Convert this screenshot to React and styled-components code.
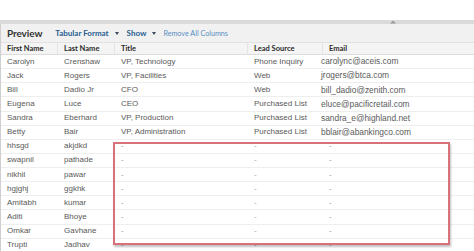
import React from "react";
import styled, { createGlobalStyle } from "styled-components";

const GlobalStyle = createGlobalStyle`
  html, body {
    margin: 0;
    padding: 0;
    background: #ffffff;
    overflow: hidden;
  }
  body {
    font-family: "Liberation Sans", Arial, sans-serif;
  }
`;

const Page = styled.div`
  position: relative;
  width: 474px;
  height: 251px;
  overflow: hidden;
  background: #fff;
`;

const TopSpace = styled.div`
  height: 20px;
  background: #fff;
`;

const Splitter = styled.div`
  height: 4px;
  background: #dadada;
  display: flex;
  justify-content: flex-start;
  padding-left: 390px;
  align-items: center;

  svg {
    display: block;
  }
`;

const Panel = styled.div`
  border-left: 1px solid #cfcfcf;
`;

const PreviewBar = styled.div`
  height: 18px;
  background: #f1f1f1;
  display: flex;
  align-items: center;
  padding-left: 6px;
  font-family: Lato, "Open Sans", sans-serif;
`;

const Heading = styled.span`
  font-size: 10px;
  font-weight: 700;
  color: #333;
  margin-right: 13px;
  letter-spacing: -0.1px;
`;

const MenuLink = styled.span`
  display: inline-flex;
  align-items: center;
  font-size: ${(p) => (p.$plain ? 7.2 : 8)}px;
  font-weight: ${(p) => (p.$plain ? 400 : 700)};
  color: ${(p) => (p.$plain ? "#5b8fc4" : "#275d91")};
`;

const Caret = styled.span`
  display: inline-block;
  width: 0;
  height: 0;
  border-left: 2px solid transparent;
  border-right: 2px solid transparent;
  border-top: 3px solid #3c4a5a;
  margin-left: 6px;
  margin-right: ${(p) => p.$gap}px;
`;

const Grid = styled.div`
  display: grid;
  grid-template-columns: 57px 57px 133px 75px 1fr;
  height: ${(p) => (p.$head ? 13 : 14.13)}px;
  box-sizing: border-box;
  align-items: center;
  background: ${(p) => (p.$head ? "#f4f4f4" : "#fff")};
  border-top: ${(p) => (p.$head ? "1px solid #e2e2e2" : "none")};
  border-bottom: 1px solid ${(p) => (p.$head ? "#dcdcdc" : "#eeeeee")};
`;

const HeadCell = styled.div`
  height: 100%;
  display: flex;
  align-items: center;
  padding-left: 6px;
  font-family: Lato, "Open Sans", sans-serif;
  font-size: 7.5px;
  font-weight: 700;
  color: #2a2a2a;
  border-left: ${(p) => (p.$first ? "none" : "1px solid #e4e4e4")};
  margin-left: ${(p) => (p.$first ? 0 : -1)}px;
  white-space: nowrap;
`;

const Cell = styled.div`
  padding-left: 6px;
  font-size: 8px;
  color: ${(p) => (p.$dash ? "#a0a0a0" : "#5a5a5a")};
  white-space: nowrap;
  line-height: 1;

  ${(p) =>
    p.$email &&
    `
    padding-left: 0;
    margin-left: -2px;
    font-size: 8.4px;
  `}
`;

const Highlight = styled.div`
  position: absolute;
  left: 113px;
  top: 142px;
  width: 337px;
  height: 103px;
  box-sizing: border-box;
  border: 2px solid #d7717a;
  box-shadow: 1px 2px 2px rgba(0, 0, 0, 0.25);
  pointer-events: none;
`;

const rows = [
  ["Carolyn", "Crenshaw", "VP, Technology", "Phone Inquiry", "carolync@aceis.com"],
  ["Jack", "Rogers", "VP, Facilities", "Web", "jrogers@btca.com"],
  ["Bill", "Dadio Jr", "CFO", "Web", "bill_dadio@zenith.com"],
  ["Eugena", "Luce", "CEO", "Purchased List", "eluce@pacificretail.com"],
  ["Sandra", "Eberhard", "VP, Production", "Purchased List", "sandra_e@highland.net"],
  ["Betty", "Bair", "VP, Administration", "Purchased List", "bblair@abankingco.com"],
  ["hhsgd", "akjdkd", "-", "-", "-"],
  ["swapnil", "pathade", "-", "-", "-"],
  ["nikhil", "pawar", "-", "-", "-"],
  ["hgjghj", "ggkhk", "-", "-", "-"],
  ["Amitabh", "kumar", "-", "-", "-"],
  ["Aditi", "Bhoye", "-", "-", "-"],
  ["Omkar", "Gavhane", "-", "-", "-"],
  ["Trupti", "Jadhav", "-", "-", "-"],
];

const columns = ["First Name", "Last Name", "Title", "Lead Source", "Email"];

export default function App() {
  return (
    <Page>
      <GlobalStyle />
      <TopSpace />
      <Splitter>
        <svg width="6" height="4" viewBox="0 0 6 4">
          <path d="M0 3.5 L3 0.5 L6 3.5" fill="#9a9a9a" />
        </svg>
      </Splitter>
      <Panel>
        <PreviewBar>
          <Heading>Preview</Heading>
          <MenuLink>Tabular Format</MenuLink>
          <Caret $gap={8} />
          <MenuLink>Show</MenuLink>
          <Caret $gap={7} />
          <MenuLink $plain>Remove All Columns</MenuLink>
        </PreviewBar>
        <Grid $head>
          {columns.map((c, i) => (
            <HeadCell key={c} $first={i === 0}>
              {c}
            </HeadCell>
          ))}
        </Grid>
        {rows.map((r) => (
          <Grid key={r[0]}>
            {r.map((v, i) => {
              const dash = v === "-";
              return (
                <Cell key={i} $dash={dash} $email={i === 4 && !dash}>
                  {v}
                </Cell>
              );
            })}
          </Grid>
        ))}
      </Panel>
      <Highlight />
    </Page>
  );
}
